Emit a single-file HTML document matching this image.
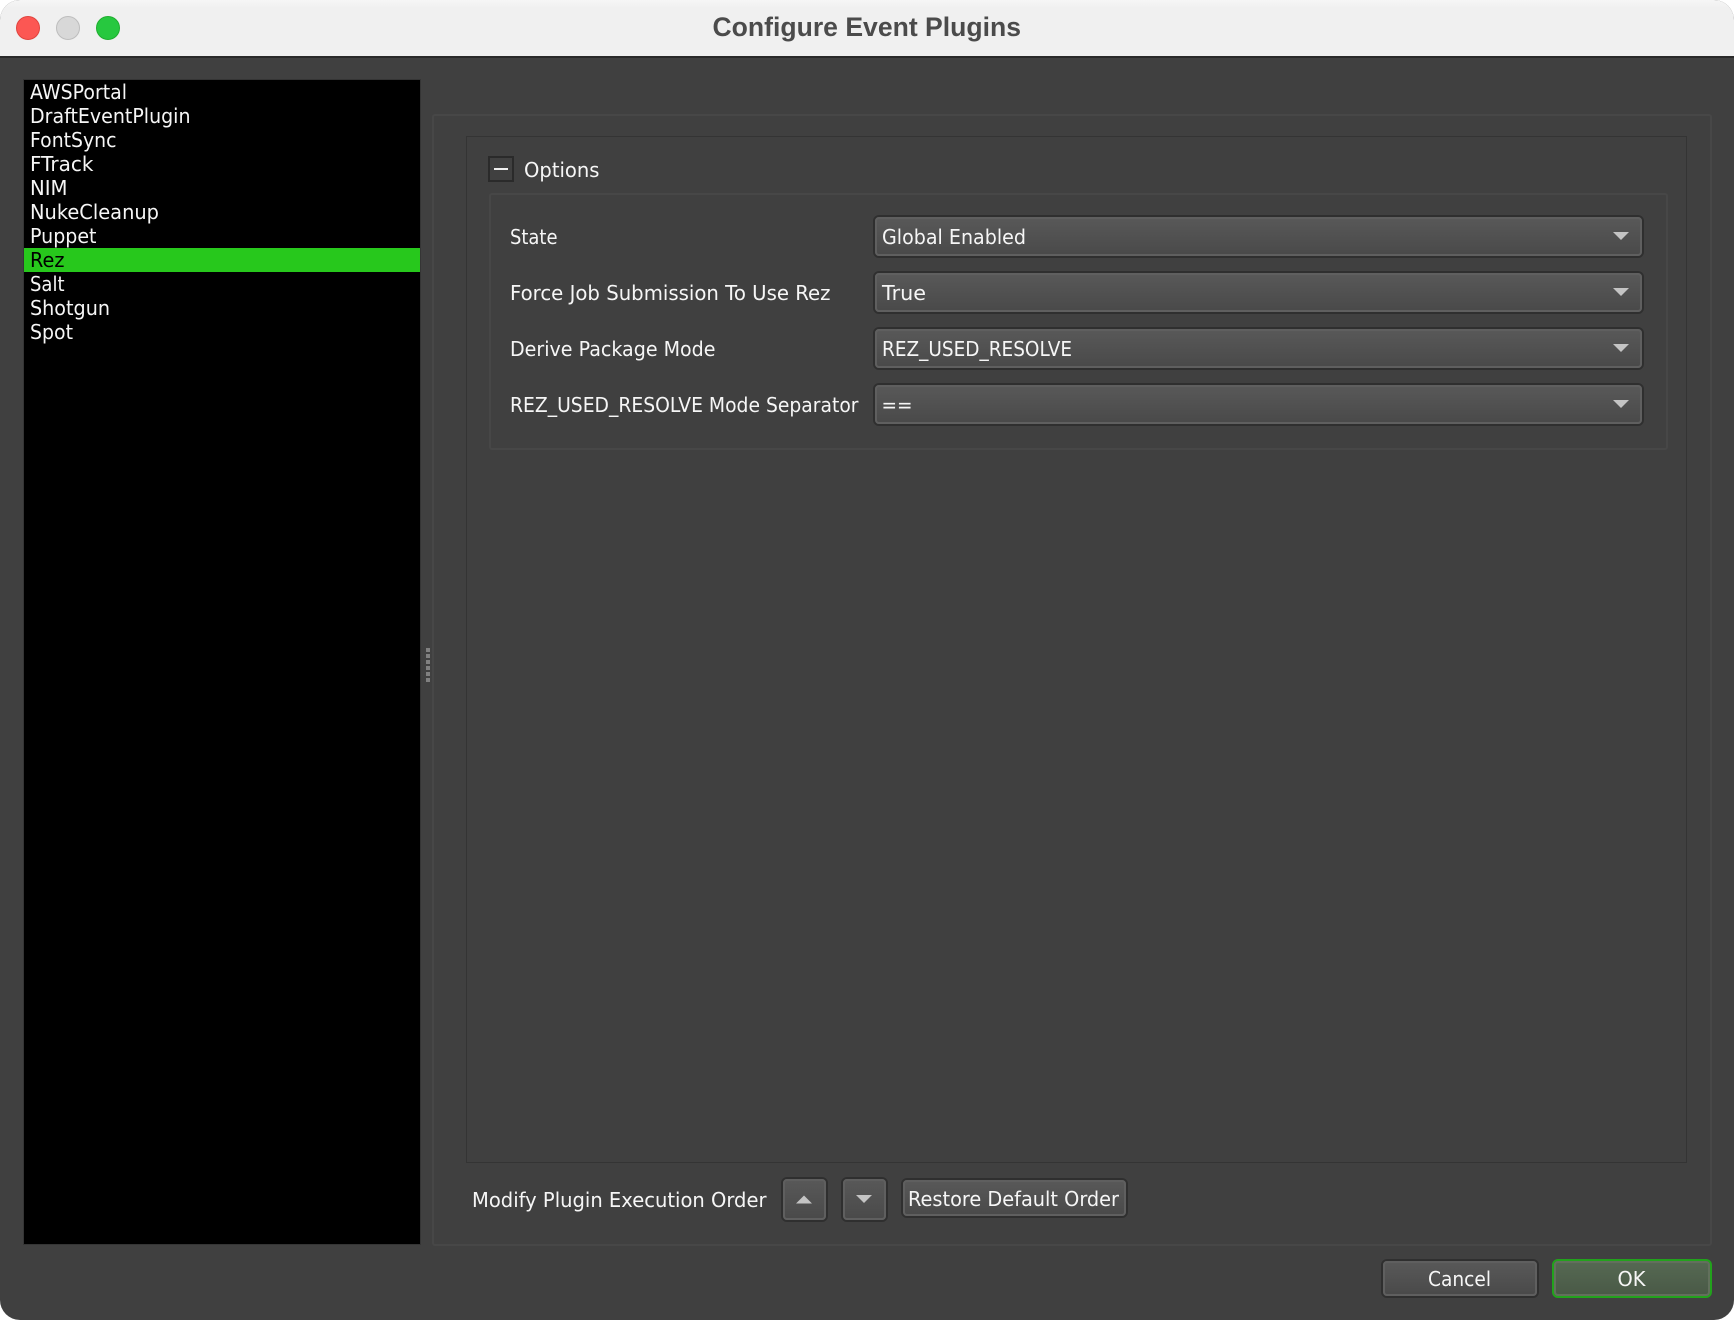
<!DOCTYPE html>
<html><head><meta charset="utf-8"><style>
html,body{margin:0;padding:0;background:#fff;width:1734px;height:1320px;overflow:hidden}
#win{position:absolute;left:0;top:0;width:1734px;height:1320px;background:#404040;border-radius:20px;overflow:hidden}
.a{position:absolute;box-sizing:border-box}
.btn{position:absolute;box-sizing:border-box;border:2px solid #2f2f2f;border-radius:6px;background:#5a5a5a;padding:0}
.btn i{display:block;width:100%;height:100%;box-sizing:border-box;border:2px solid #5f5f5f;border-radius:4px;background:linear-gradient(#585858,#4a4a4a)}
.dot{position:absolute;width:24px;height:24px;border-radius:50%;box-sizing:border-box}
svg{position:absolute;left:0;top:0}
text{font-family:"DejaVu Sans",sans-serif;font-size:20px;fill:#f6f6f6}
</style></head><body><div id="win">
<div class="a" style="left:0;top:0;width:1734px;height:56px;background:linear-gradient(#f6f6f6,#f0f0f0 8px);"></div>
<div class="a" style="left:0;top:56px;width:1734px;height:2px;background:#2a2a2a"></div>
<div class="dot" style="left:16px;top:16px;background:#fc5753;border:1px solid #e0443e"></div>
<div class="dot" style="left:56px;top:16px;background:#d8d8d8;border:1px solid #bdbdbd"></div>
<div class="dot" style="left:96px;top:16px;background:#27c83f;border:1px solid #1fae2f"></div>

<div class="a" style="left:23px;top:79px;width:398px;height:1166px;background:#000;border:1px solid #353535"></div>
<div class="a" style="left:24px;top:248px;width:396px;height:24px;background:#27c81c"></div>

<div class="a" style="left:432px;top:114px;width:1280px;height:1132px;border:2px solid #474747;border-radius:3px"></div>
<div class="a" style="left:466px;top:136px;width:1221px;height:1027px;border:1px solid #343434"></div>
<div class="a" style="left:488px;top:156px;width:26px;height:26px;border:2px solid #2a2a2a"></div>
<div class="a" style="left:494px;top:168px;width:14px;height:2px;background:#f0f0f0"></div>
<div class="a" style="left:488.5px;top:192.5px;width:1179.5px;height:257px;border:2px solid #474747;border-radius:3px"></div>

<div class="a" style="left:426px;top:648px;width:4px;height:4px;background:#808080"></div>
<div class="a" style="left:426px;top:654px;width:4px;height:4px;background:#808080"></div>
<div class="a" style="left:426px;top:660px;width:4px;height:4px;background:#808080"></div>
<div class="a" style="left:426px;top:666px;width:4px;height:4px;background:#808080"></div>
<div class="a" style="left:426px;top:672px;width:4px;height:4px;background:#808080"></div>
<div class="a" style="left:426px;top:678px;width:4px;height:4px;background:#808080"></div>

<div class="btn" style="left:872.5px;top:214.5px;width:771.5px;height:43px"><i></i></div>
<div class="btn" style="left:872.5px;top:270.5px;width:771.5px;height:43px"><i></i></div>
<div class="btn" style="left:872.5px;top:326.5px;width:771.5px;height:43px"><i></i></div>
<div class="btn" style="left:872.5px;top:382.5px;width:771.5px;height:43px"><i></i></div>
<div class="btn" style="left:780.5px;top:1176.5px;width:47px;height:45.5px"><i></i></div>
<div class="btn" style="left:840.5px;top:1176.5px;width:47px;height:45.5px"><i></i></div>
<div class="btn" style="left:900.5px;top:1178px;width:227.5px;height:40px"><i></i></div>
<div class="btn" style="left:1380.5px;top:1258.5px;width:158.5px;height:39.5px"><i></i></div>
<div class="btn" style="left:1552px;top:1258.5px;width:160px;height:39.5px;border-color:#22a21c"><i style="border-color:#62705c;background:linear-gradient(#556852,#4a5a47)"></i></div>

<svg width="1734" height="1320" viewBox="0 0 1734 1320">
<text x="712.5" y="36" textLength="308.5" lengthAdjust="spacingAndGlyphs" style="font-family:'Liberation Sans',sans-serif;font-weight:700;font-size:26.5px;fill:#4b4b4b">Configure Event Plugins</text>
<text x="30" y="99" textLength="97" lengthAdjust="spacingAndGlyphs">AWSPortal</text>
<text x="30" y="123" textLength="160.5" lengthAdjust="spacingAndGlyphs">DraftEventPlugin</text>
<text x="30" y="147" textLength="86.5" lengthAdjust="spacingAndGlyphs">FontSync</text>
<text x="30" y="171" textLength="63.5" lengthAdjust="spacingAndGlyphs">FTrack</text>
<text x="30" y="195" textLength="37.5" lengthAdjust="spacingAndGlyphs">NIM</text>
<text x="30" y="219" textLength="129" lengthAdjust="spacingAndGlyphs">NukeCleanup</text>
<text x="30" y="243" textLength="66.5" lengthAdjust="spacingAndGlyphs">Puppet</text>
<text x="30" y="267" textLength="34.5" lengthAdjust="spacingAndGlyphs" style="fill:#000">Rez</text>
<text x="30" y="291" textLength="34.5" lengthAdjust="spacingAndGlyphs">Salt</text>
<text x="30" y="315" textLength="80" lengthAdjust="spacingAndGlyphs">Shotgun</text>
<text x="30" y="339" textLength="43" lengthAdjust="spacingAndGlyphs">Spot</text>
<text x="524" y="177" textLength="75.5" lengthAdjust="spacingAndGlyphs">Options</text>
<text x="510" y="244" textLength="47.5" lengthAdjust="spacingAndGlyphs">State</text>
<text x="510" y="300" textLength="320.5" lengthAdjust="spacingAndGlyphs">Force Job Submission To Use Rez</text>
<text x="510" y="356" textLength="205.5" lengthAdjust="spacingAndGlyphs">Derive Package Mode</text>
<text x="510" y="412" textLength="348.5" lengthAdjust="spacingAndGlyphs">REZ_USED_RESOLVE Mode Separator</text>
<text x="882" y="244" textLength="144" lengthAdjust="spacingAndGlyphs">Global Enabled</text>
<text x="882" y="300" textLength="44" lengthAdjust="spacingAndGlyphs">True</text>
<text x="882" y="356" textLength="190" lengthAdjust="spacingAndGlyphs">REZ_USED_RESOLVE</text>
<text x="881.5" y="412" textLength="31" lengthAdjust="spacingAndGlyphs">==</text>
<text x="472" y="1207" textLength="294.5" lengthAdjust="spacingAndGlyphs">Modify Plugin Execution Order</text>
<text x="908" y="1206" textLength="211" lengthAdjust="spacingAndGlyphs">Restore Default Order</text>
<text x="1428" y="1286" textLength="63" lengthAdjust="spacingAndGlyphs">Cancel</text>
<text x="1617.5" y="1286" textLength="28" lengthAdjust="spacingAndGlyphs">OK</text>
<path d="M1613 232h16l-8 8z M1613 288h16l-8 8z M1613 344h16l-8 8z M1613 400h16l-8 8z" fill="#c4c4c4"/>
<path d="M796 1203.5h16l-8-8z" fill="#c4c4c4"/>
<path d="M856 1195h16l-8 8z" fill="#c4c4c4"/>
</svg>
</div></body></html>
